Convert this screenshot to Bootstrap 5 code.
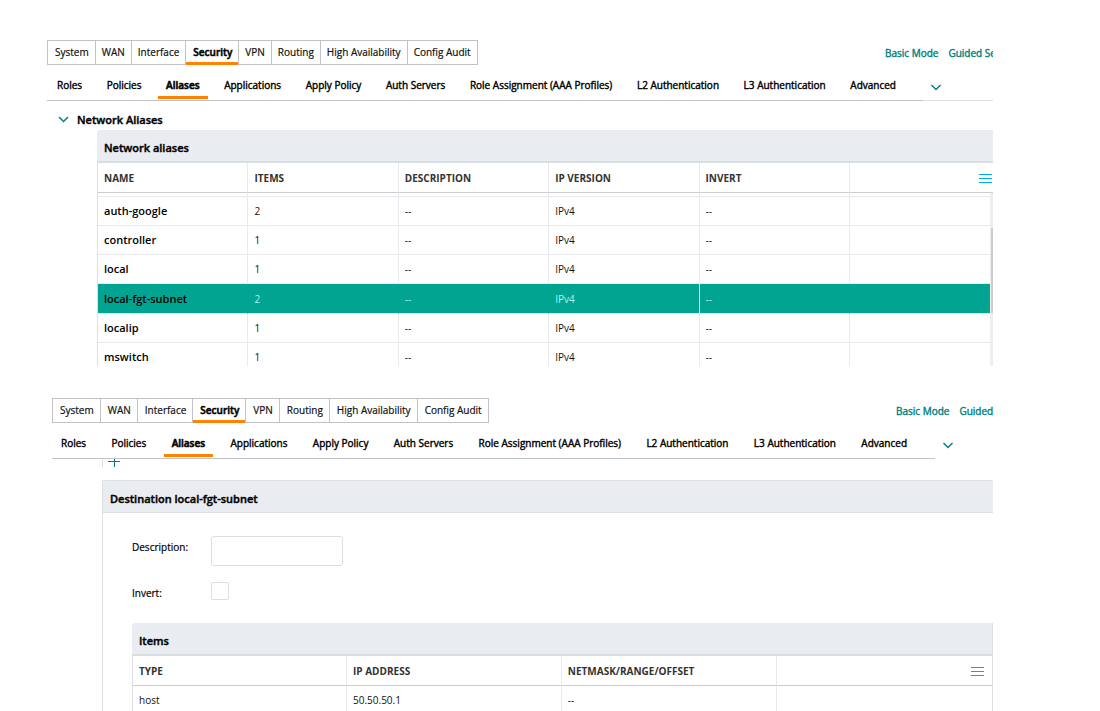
<!DOCTYPE html>
<html lang="en">
<head>
<meta charset="utf-8">
<meta name="viewport" content="width=device-width, initial-scale=1">
<title>Network Aliases</title>
<link href="https://cdn.jsdelivr.net/npm/bootstrap@5.3.0/dist/css/bootstrap.min.css" rel="stylesheet">
<style>
  body { font-family: "Open Sans", "Noto Sans", sans-serif; font-size: 10px; line-height: 14px; color: #000; height: 100vh; overflow: hidden; }
  .shot { padding-right: 107px; }
  .shot-aliases { padding-left: 47px; padding-top: 40px; }
  .shot-destination { padding-left: 52px; padding-top: 32px; }
  .clip { overflow: hidden; }
  .shot-aliases .clip { height: 326px; }
  a { text-decoration: none; }

  .main-tabs { border: 1px solid #c1c1c8; height: 25px; }
  .main-tabs .nav-link { color: #111; padding: 4px 6px 0 7px; height: 23px; line-height: 14px; -webkit-text-stroke: .2px; }
  .main-tabs .nav-item + .nav-item { border-left: 1px solid #c1c1c8; }
  .main-tabs .nav-link.active { font-weight: 600; color: #000; height: 24px; border-bottom: 3px solid #ff8300; -webkit-text-stroke: .5px; }
  .shot-aliases .main-tabs .nav-link { padding-left: 6px; }
  .shot-aliases .main-tabs .nav-item:first-child .nav-link,
  .shot-aliases .main-tabs .nav-link.active { padding-left: 7px; }
  .mode-link { color: #01827e; white-space: nowrap; -webkit-text-stroke: .4px; }
  .modes { width: 108px; gap: 10px; padding-top: 6px; }
  .shot-destination .modes { width: 97px; }

  .sub-row { border-bottom: 1px solid #dedee3; height: 36px; }
  .shot-destination .sub-row { border-bottom-color: transparent; }
  .sub-tabs { border-bottom: 1px solid #c1c1c8; height: 36px; padding: 0 19px 0 2px; margin-right: 70px; }
  .shot-destination .sub-tabs { margin-right: 58px; padding: 0 20px 0 1px; }
  .sub-tabs .nav-link { color: #000; padding: 13px 8px 0; height: 34px; white-space: nowrap; -webkit-text-stroke: .4px; }
  .sub-tabs .nav-link.active { font-weight: 600; border-bottom: 3px solid #ff8300; -webkit-text-stroke: .6px; }
  .more-btn { left: calc(100% - 63px); top: 17px; }
  .shot-destination .more-btn { left: calc(100% - 51px); }
  .icon-btn { background: none; border: 0; padding: 0; line-height: 0; }

  .section-title { font-size: 11px; line-height: 15px; font-weight: 600; height: 29px; padding: 11px 0 0 11px; gap: 8px; -webkit-text-stroke: .4px; }
  .grid-box { margin-left: 50px; }
  .band { background: #e9ecf1; font-size: 11px; line-height: 15px; font-weight: 600; padding: 10px 7px 6px; height: 31px; border-top-left-radius: 3px; margin: 0; -webkit-text-stroke: .4px; }

  .grid-table { table-layout: fixed; width: 100%; border-top: 2px solid #d8dfe2; border-left: 1px solid #dedee3; border-collapse: separate; border-spacing: 0; }
  .grid-table th { height: 30px; padding: 0 6px; font-weight: 700; color: #333; border-bottom: 1px solid #cdcdcf; }
  .grid-table td { height: 29px; padding: 0 6px; border-bottom: 1px solid #e9e9f0; color: #111; }
  .grid-table th + th, .grid-table td + td, .grid-table th + td { border-left: 1px solid #e9e9f0; }
  .grid-table tbody th { font-size: 11px; font-weight: 600; color: #000; height: 29px; border-bottom: 1px solid #e9e9f0; }
  .grid-table .scrolled td { height: 4px; padding: 0; }
  .grid-table .chosen > * { background: #00a490; height: 30px; }
  .grid-table .chosen > td { color: #b9efe8; border-left-color: #00a490; }
  .grid-table .chosen > td:nth-child(5) { border-left-color: #fff; }
  .menu-cell { text-align: right; }
  .grid-table .menu-cell { padding-right: 1px; }
  .scroll-track { right: 0; top: 63px; bottom: 0; width: 3px; background: #eee; }
  .scroll-thumb { width: 2px; height: 85px; margin: 35px 0 0 1px; background: #cdcdcd; }

  .add-strip { margin-left: 50px; height: 8px; border-left: 1px solid #dedee3; padding-left: 5px; overflow: hidden; line-height: 0; }
  .detail { margin: 13px 0 0 50px; border-left: 1px solid #dedee3; border-top: 1px solid #dedee3; }
  .detail > .band { height: 32px; border-bottom: 1px solid #dedee3; }
  .field-label { width: 79px; padding-top: 4px; -webkit-text-stroke: .2px; }
  .fields { padding: 23px 0 0 29px; }
  .fields .form-control { width: 132px; height: 30px; font-size: 10px; border: 1px solid #dedee0; border-radius: 3px; }
  .fields .form-check-input { width: 18px; height: 18px; margin: 0; border: 1px solid #dedee0; border-radius: 2px; }
  .items-box { margin: 23px 0 0 29px; border-right: 1px solid #dedee3; }
  .items-box .menu-cell { padding-right: 8px; }
</style>
</head>
<body class="bg-white">

<section class="shot shot-aliases">
  <div class="clip">
    <div class="d-flex justify-content-between">
      <ul class="nav main-tabs flex-nowrap">
        <li class="nav-item"><a class="nav-link" href="#">System</a></li>
        <li class="nav-item"><a class="nav-link" href="#">WAN</a></li>
        <li class="nav-item"><a class="nav-link" href="#">Interface</a></li>
        <li class="nav-item"><a class="nav-link active" href="#">Security</a></li>
        <li class="nav-item"><a class="nav-link" href="#">VPN</a></li>
        <li class="nav-item"><a class="nav-link" href="#">Routing</a></li>
        <li class="nav-item"><a class="nav-link" href="#">High Availability</a></li>
        <li class="nav-item"><a class="nav-link" href="#">Config Audit</a></li>
      </ul>
      <div class="modes d-flex overflow-hidden">
        <a class="mode-link" href="#">Basic Mode</a>
        <a class="mode-link" href="#">Guided Se</a>
      </div>
    </div>
    <div class="sub-row position-relative">
      <nav class="nav sub-tabs justify-content-between flex-nowrap">
        <a class="nav-link" href="#">Roles</a>
        <a class="nav-link" href="#">Policies</a>
        <a class="nav-link active" href="#">Aliases</a>
        <a class="nav-link" href="#">Applications</a>
        <a class="nav-link" href="#">Apply Policy</a>
        <a class="nav-link" href="#">Auth Servers</a>
        <a class="nav-link" href="#">Role Assignment (AAA Profiles)</a>
        <a class="nav-link" href="#">L2 Authentication</a>
        <a class="nav-link" href="#">L3 Authentication</a>
        <a class="nav-link" href="#">Advanced</a>
      </nav>
      <button class="icon-btn more-btn position-absolute" type="button" aria-label="More tabs">
        <svg width="12" height="10" viewBox="0 0 12 10" fill="none" stroke="#01827e" stroke-width="1.5"><path d="M1.500 3 L6 7.500 L10.500 3"/></svg>
      </button>
    </div>
    <h2 class="section-title d-flex m-0">
      <svg width="11" height="15" viewBox="0 0 11 15" fill="none" stroke="#01827e" stroke-width="1.500"><path d="M1 5 L5.500 9.500 L10 5"/></svg>
      Network Aliases
    </h2>
    <div class="grid-box position-relative">
      <h3 class="band">Network aliases</h3>
      <table class="grid-table">
        <colgroup><col style="width:16.7%"><col style="width:16.8%"><col style="width:16.8%"><col style="width:16.8%"><col style="width:16.8%"><col></colgroup>
        <thead><tr>
          <th scope="col">NAME</th><th scope="col">ITEMS</th><th scope="col">DESCRIPTION</th><th scope="col">IP VERSION</th><th scope="col">INVERT</th>
          <th class="menu-cell"><button class="icon-btn" type="button" aria-label="Columns"><svg width="13" height="12" viewBox="0 0 13 12" stroke="#00a9ea"><path d="M0 1.500H13M0 5.500H13M0 9.500H13"/></svg></button></th>
        </tr></thead>
        <tbody>
          <tr class="scrolled" aria-hidden="true"><td></td><td></td><td></td><td></td><td></td><td></td></tr>
          <tr><th scope="row">auth-google</th><td>2</td><td>--</td><td>IPv4</td><td>--</td><td></td></tr>
          <tr><th scope="row">controller</th><td>1</td><td>--</td><td>IPv4</td><td>--</td><td></td></tr>
          <tr><th scope="row">local</th><td>1</td><td>--</td><td>IPv4</td><td>--</td><td></td></tr>
          <tr class="chosen"><th scope="row">local-fgt-subnet</th><td>2</td><td>--</td><td>IPv4</td><td>--</td><td></td></tr>
          <tr><th scope="row">localip</th><td>1</td><td>--</td><td>IPv4</td><td>--</td><td></td></tr>
          <tr><th scope="row">mswitch</th><td>1</td><td>--</td><td>IPv4</td><td>--</td><td></td></tr>
        </tbody>
      </table>
      <div class="scroll-track position-absolute"><div class="scroll-thumb"></div></div>
    </div>
  </div>
</section>

<section class="shot shot-destination">
  <div class="clip">
    <div class="d-flex justify-content-between">
      <ul class="nav main-tabs flex-nowrap">
        <li class="nav-item"><a class="nav-link" href="#">System</a></li>
        <li class="nav-item"><a class="nav-link" href="#">WAN</a></li>
        <li class="nav-item"><a class="nav-link" href="#">Interface</a></li>
        <li class="nav-item"><a class="nav-link active" href="#">Security</a></li>
        <li class="nav-item"><a class="nav-link" href="#">VPN</a></li>
        <li class="nav-item"><a class="nav-link" href="#">Routing</a></li>
        <li class="nav-item"><a class="nav-link" href="#">High Availability</a></li>
        <li class="nav-item"><a class="nav-link" href="#">Config Audit</a></li>
      </ul>
      <div class="modes d-flex overflow-hidden">
        <a class="mode-link" href="#">Basic Mode</a>
        <a class="mode-link" href="#">Guided</a>
      </div>
    </div>
    <div class="sub-row position-relative">
      <nav class="nav sub-tabs justify-content-between flex-nowrap">
        <a class="nav-link" href="#">Roles</a>
        <a class="nav-link" href="#">Policies</a>
        <a class="nav-link active" href="#">Aliases</a>
        <a class="nav-link" href="#">Applications</a>
        <a class="nav-link" href="#">Apply Policy</a>
        <a class="nav-link" href="#">Auth Servers</a>
        <a class="nav-link" href="#">Role Assignment (AAA Profiles)</a>
        <a class="nav-link" href="#">L2 Authentication</a>
        <a class="nav-link" href="#">L3 Authentication</a>
        <a class="nav-link" href="#">Advanced</a>
      </nav>
      <button class="icon-btn more-btn position-absolute" type="button" aria-label="More tabs">
        <svg width="12" height="10" viewBox="0 0 12 10" fill="none" stroke="#01827e" stroke-width="1.5"><path d="M1.500 3 L6 7.500 L10.500 3"/></svg>
      </button>
    </div>
    <div class="add-strip">
      <button class="icon-btn" type="button" aria-label="Add alias"><svg width="12" height="8" viewBox="0 0 12 8" stroke="#01827e"><path d="M0 2.500H12M6.500 0V8"/></svg></button>
    </div>
    <div class="detail">
      <h3 class="band">Destination local-fgt-subnet</h3>
      <form class="fields">
        <div class="d-flex">
          <label class="field-label" for="description">Description:</label>
          <input class="form-control" type="text" id="description">
        </div>
        <div class="d-flex mt-3">
          <label class="field-label" for="invert">Invert:</label>
          <input class="form-check-input" type="checkbox" id="invert">
        </div>
      </form>
      <div class="items-box">
        <h4 class="band">Items</h4>
        <table class="grid-table">
          <colgroup><col style="width:24.8%"><col style="width:25%"><col style="width:25%"><col></colgroup>
          <thead><tr>
            <th scope="col">TYPE</th><th scope="col">IP ADDRESS</th><th scope="col">NETMASK/RANGE/OFFSET</th>
            <th class="menu-cell"><button class="icon-btn" type="button" aria-label="Columns"><svg width="13" height="12" viewBox="0 0 13 12" stroke="#00a9ea"><path d="M0 1.500H13M0 5.500H13M0 9.500H13"/></svg></button></th>
          </tr></thead>
          <tbody>
            <tr><td>host</td><td>50.50.50.1</td><td>--</td><td></td></tr>
          </tbody>
        </table>
      </div>
    </div>
  </div>
</section>

<script src="https://cdn.jsdelivr.net/npm/bootstrap@5.3.0/dist/js/bootstrap.bundle.min.js"></script>
</body>
</html>
